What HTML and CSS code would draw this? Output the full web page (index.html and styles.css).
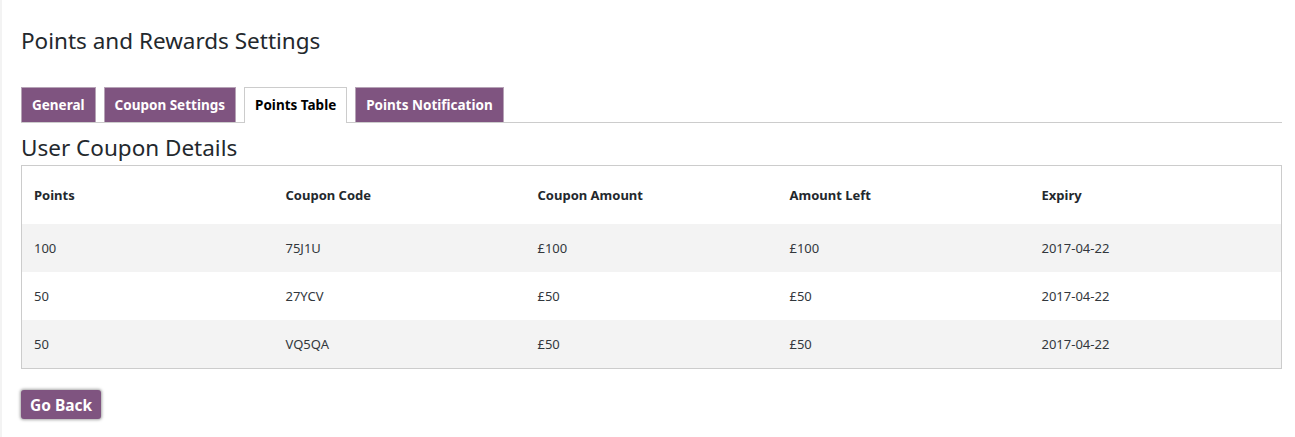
FILE: index.html
```html
<!DOCTYPE html>
<html>
<head>
<meta charset="utf-8">
<link rel="stylesheet" href="styles.css">
</head>
<body>
<div class="page">
  <h1 class="title">Points and Rewards Settings</h1>
  <nav class="tabs">
    <a class="tab">General</a>
    <a class="tab">Coupon Settings</a>
    <a class="tab active">Points Table</a>
    <a class="tab">Points Notification</a>
  </nav>
  <h2 class="subtitle">User Coupon Details</h2>
  <table class="coupons">
    <thead>
      <tr><th>Points</th><th>Coupon Code</th><th>Coupon Amount</th><th>Amount Left</th><th>Expiry</th></tr>
    </thead>
    <tbody>
      <tr><td>100</td><td>75J1U</td><td>£100</td><td>£100</td><td>2017-04-22</td></tr>
      <tr><td>50</td><td>27YCV</td><td>£50</td><td>£50</td><td>2017-04-22</td></tr>
      <tr><td>50</td><td>VQ5QA</td><td>£50</td><td>£50</td><td>2017-04-22</td></tr>
    </tbody>
  </table>
  <button class="back">Go Back</button>
</div>
</body>
</html>
```
FILE: styles.css
```css
html, body {
  margin: 0;
  padding: 0;
  background: #fff;
}
body {
  box-sizing: border-box;
  min-height: 100vh;
  border-left: 2px solid #f3f3f3;
  font-family: "Noto Sans", "Open Sans", sans-serif;
  color: #32373c;
}
.page {
  padding: 0 13px 0 19px;
}
.title {
  margin: 0;
  padding-top: 26px;
  font-size: 22.5px;
  line-height: 29px;
  font-weight: 400;
  color: #23282d;
}
.tabs {
  display: flex;
  gap: 8px;
  margin-top: 32px;
  border-bottom: 1px solid #ccc;
  height: 35px;
}
.tab {
  display: block;
  box-sizing: border-box;
  height: 35px;
  padding: 0 10px;
  line-height: 34px;
  font-size: 13.5px;
  font-weight: 700;
  color: #fff;
  background: #7f5480;
  border: 1px solid #b6a3b6;
  border-bottom: none;
}
.tab.active {
  background: #fff;
  color: #000;
  border-color: #ccc;
  height: 36px;
}
.subtitle {
  margin: 0;
  font-size: 22.5px;
  line-height: 29px;
  font-weight: 400;
  color: #23282d;
  padding-top: 10px;
  height: 42px;
  box-sizing: border-box;
}
.coupons {
  width: 100%;
  border-collapse: collapse;
  border: 1px solid #ccc;
  table-layout: fixed;
  font-size: 13px;
}
.coupons th, .coupons td {
  text-align: left;
  padding: 0 12px;
}
.coupons th {
  height: 58px;
  font-weight: 700;
  color: #23282d;
}
.coupons td {
  height: 48px;
  color: #32373c;
}
.coupons tbody tr:nth-child(odd) {
  background: #f3f3f3;
}
.back {
  display: block;
  margin-top: 21px;
  height: 29px;
  padding: 0 9px;
  border: none;
  border-radius: 3px;
  background: #7f5480;
  color: #fff;
  font-family: inherit;
  font-size: 15.5px;
  font-weight: 700;
  box-shadow: 0 0 3px 1px rgba(0,0,0,0.35);
}
```
